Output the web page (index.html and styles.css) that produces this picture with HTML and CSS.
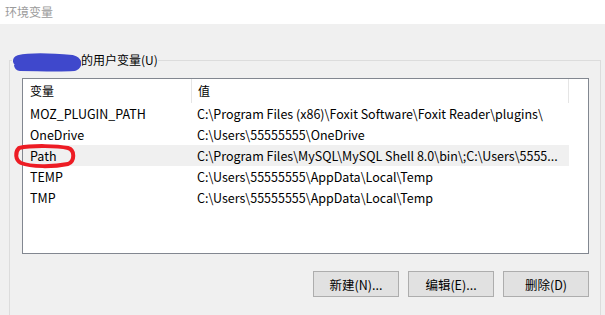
FILE: index.html
```html
<!DOCTYPE html>
<html lang="zh-CN">
<head>
<meta charset="utf-8">
<title>环境变量</title>
<link rel="stylesheet" href="styles.css">
</head>
<body>
<div class="titlebar">环境变量</div>
<fieldset class="group">
  <legend class="legend"><svg class="blob" width="70" height="22" viewBox="0 0 70 22"><path d="M7 10 C 20 7, 40 8, 60 10 C 64 11, 64 13, 62 14 C 45 15, 25 14, 8 14" fill="none" stroke="#3f48cc" stroke-width="12" stroke-linecap="round" stroke-linejoin="round"/></svg><span>的用户变量(U)</span></legend>
  <div class="list">
    <div class="row head">
      <div class="c1">变量</div>
      <div class="c2">值</div>
    </div>
    <div class="row"><div class="c1">MOZ_PLUGIN_PATH</div><div class="c2">C:\Program Files (x86)\Foxit Software\Foxit Reader\plugins\</div></div>
    <div class="row"><div class="c1">OneDrive</div><div class="c2">C:\Users\55555555\OneDrive</div></div>
    <div class="row sel"><div class="c1">Path</div><div class="c2">C:\Program Files\MySQL\MySQL Shell 8.0\bin\;C:\Users\5555...</div></div>
    <div class="row"><div class="c1">TEMP</div><div class="c2">C:\Users\55555555\AppData\Local\Temp</div></div>
    <div class="row"><div class="c1">TMP</div><div class="c2">C:\Users\55555555\AppData\Local\Temp</div></div>
    <svg class="mark" width="64" height="28" viewBox="0 0 64 28"><path d="M6 6 C 20 3, 45 4, 55 6 C 62 8, 62 19, 55 22 C 40 25, 18 25, 8 21 C 2 18, 2 10, 6 6 Z" fill="none" stroke="#ed1c24" stroke-width="4" stroke-linejoin="round"/></svg>
  </div>
  <div class="buttons">
    <button class="btn">新建(N)...</button>
    <button class="btn">编辑(E)...</button>
    <button class="btn">删除(D)</button>
  </div>
</fieldset>
</body>
</html>
```
FILE: styles.css
```css
html, body {
  margin: 0;
  padding: 0;
}
body {
  width: 605px;
  height: 315px;
  overflow: hidden;
  background: #f0f0f0;
  font-family: "Noto Sans CJK SC", "Noto Sans", sans-serif;
  font-size: 12.5px;
  color: #000;
}
.titlebar {
  height: 24px;
  line-height: 24px;
  background: #fff;
  color: #9b9b9b;
  padding-left: 5px;
  font-size: 12px;
}
.group {
  margin: 28px 0 0 9px;
  box-sizing: border-box;
  width: 592px;
  height: 263px;
  border: 1px solid #dcdcdc;
  border-bottom: 0;
  padding: 10px 11px 0 12px;
}
.legend {
  padding: 0;
  margin-left: -10px;
  height: 16px;
  line-height: 16px;
  display: flex;
  align-items: center;
  font-size: 12px;
}
.legend span {
  margin-left: -1px;
  background: #f0f0f0;
}
.blob {
  display: block;
  margin-top: 4px;
}
.list {
  position: relative;
  height: 176px;
  box-sizing: border-box;
  border: 1px solid #828790;
  background: #fff;
}
.row {
  display: flex;
  height: 21px;
  line-height: 21px;
  width: 546px;
  white-space: nowrap;
}
.row.head {
  height: 24px;
  line-height: 24px;
}
.row.head .c1, .row.head .c2 {
  border-right: 1px solid #e5e5e5;
  font-size: 12px;
}
.c1 {
  width: 161px;
  padding-left: 7px;
  flex: none;
}
.c2 {
  flex: 1;
  padding-left: 6px;
  overflow: hidden;
}
.row.sel {
  background: #f0f0f0;
}
.mark {
  position: absolute;
  left: -10px;
  top: 63px;
}
.buttons {
  display: flex;
  justify-content: flex-end;
  gap: 9px;
  margin-top: 17px;
}
.btn {
  width: 86px;
  height: 26px;
  box-sizing: border-box;
  border: 1px solid #adadad;
  background: #e1e1e1;
  font-family: "Noto Sans CJK SC", "Noto Sans", sans-serif;
  font-size: 12.5px;
  color: #000;
  padding: 0;
}
```
